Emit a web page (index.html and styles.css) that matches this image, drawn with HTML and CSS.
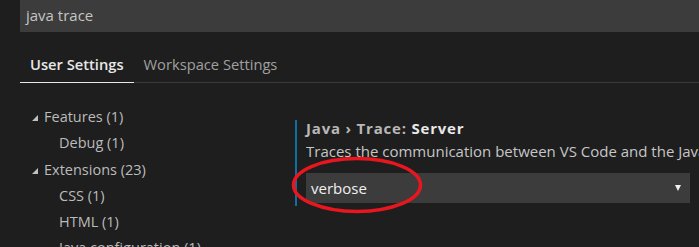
FILE: index.html
```html
<!DOCTYPE html>
<html lang="en">
<head>
    <meta charset="UTF-8">
    <title>Settings</title>
    <link rel="stylesheet" href="styles.css">
</head>
<body>
    <div class="search">java trace</div>

    <div class="tabs">
        <div class="tab active">User Settings</div>
        <div class="tab">Workspace Settings</div>
    </div>

    <div class="main">
        <!-- 左侧目录树 -->
        <ul class="tree">
            <li class="group"><span class="twist"></span>Features (1)</li>
            <li class="leaf">Debug (1)</li>
            <li class="group"><span class="twist"></span>Extensions (23)</li>
            <li class="leaf">CSS (1)</li>
            <li class="leaf">HTML (1)</li>
            <li class="leaf">Java configuration (1)</li>
        </ul>

        <!-- 设置项 -->
        <div class="setting">
            <div class="title">Java › Trace: <b>Server</b></div>
            <div class="desc">Traces the communication between VS Code and the Java language server.</div>
            <div class="select">
                <span>verbose</span>
                <span class="arrow"></span>
            </div>
        </div>
    </div>

    <!-- 红色圈注 -->
    <svg class="mark" width="140" height="62" viewBox="0 0 140 62">
        <ellipse cx="66" cy="29" rx="63.5" ry="26.5" fill="none" stroke="#e8161e" stroke-width="3.5"/>
    </svg>
</body>
</html>
```

FILE: styles.css
```css
body {
    margin: 0;
    background-color: #1e1e1e;
    font-family: 'Open Sans', 'Noto Sans', sans-serif;
    font-size: 14px;
    color: #bbbbbb;
    overflow: hidden;
    position: relative;
    height: 247px;
}

/* 搜索框 */
.search {
    margin-left: 20px;
    height: 32px;
    line-height: 31px;
    padding-left: 6px;
    background-color: #3c3c3c;
    color: #c4c4c4;
    font-size: 15px;
}

/* 标签页 */
.tabs {
    display: flex;
    margin-left: 20px;
    height: 50px;
    align-items: flex-end;
    border-bottom: 1px solid #3a3a3a;
}

.tab {
    padding: 0 10px 8px;
    font-size: 14.7px;
    color: #a0a0a0;
}

.tab.active {
    color: #e8e8e8;
    font-weight: 600;
    border-bottom: 1px solid #e8e8e8;
    margin-bottom: -1px;
}

.main {
    display: flex;
    padding-top: 21px;
}

/* 目录树 */
.tree {
    list-style: none;
    margin: 0;
    padding: 0 0 0 32px;
    width: 263px;
    flex-shrink: 0;
    font-size: 14.5px;
}

.tree li {
    height: 26.3px;
    line-height: 26.3px;
    white-space: nowrap;
}

.tree .leaf {
    padding-left: 27px;
}

.twist {
    display: inline-block;
    width: 0;
    height: 0;
    border-left: 6px solid transparent;
    border-bottom: 6px solid #c0c0c0;
    margin-right: 6px;
    vertical-align: 1px;
}

/* 设置项 */
.setting {
    flex: 1;
    min-width: 0;
    margin-top: 16px;
    border-left: 2px solid #0e6fa3;
    padding-left: 9px;
    height: 86px;
    white-space: nowrap;
}

.title {
    font-size: 15px;
    font-weight: 700;
    color: #b8b8b8;
    line-height: 20px;
    margin-top: -2px;
    letter-spacing: 0.8px;
}

.title b {
    color: #e8e8e8;
    font-weight: 700;
}

.desc {
    font-size: 15px;
    color: #c6c6c6;
    line-height: 26px;
    overflow: hidden;
}

.select {
    display: flex;
    align-items: center;
    justify-content: space-between;
    height: 30px;
    margin: 9px 9px 0 0;
    padding: 0 9px 0 5px;
    background-color: #3c3c3c;
    color: #f0f0f0;
    font-size: 15px;
}

.arrow {
    width: 0;
    height: 0;
    border-left: 3px solid transparent;
    border-right: 3px solid transparent;
    border-top: 6px solid #f0f0f0;
}

/* 圈注覆盖层 */
.mark {
    position: absolute;
    left: 291px;
    top: 156px;
}
```
